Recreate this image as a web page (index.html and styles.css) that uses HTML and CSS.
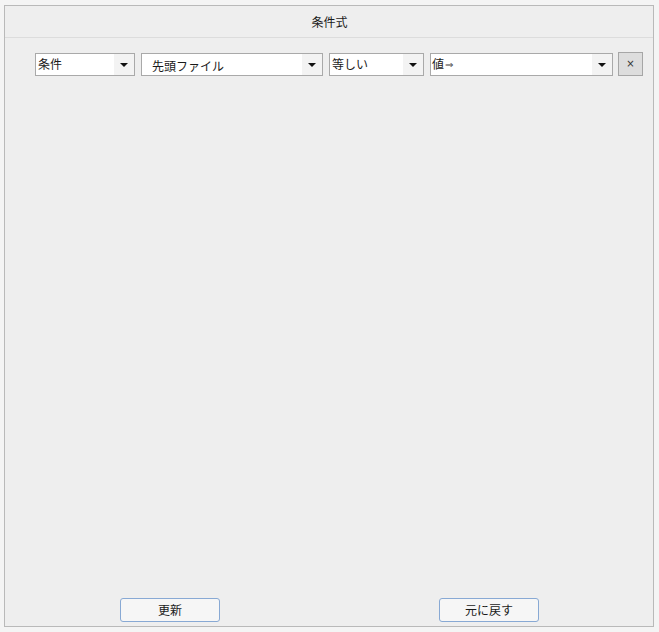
FILE: index.html
```html
<!DOCTYPE html>
<html lang="ja">
<head>
<meta charset="utf-8">
<link rel="stylesheet" href="styles.css">
</head>
<body>
<div class="frame">
  <div class="header">条件式</div>
  <div class="row">
    <div class="select w1"><span class="val">条件</span><span class="arrow"><i></i></span></div>
    <div class="select w2"><span class="val pad low">先頭ファイル</span><span class="arrow"><i></i></span></div>
    <div class="select w3"><span class="val">等しい</span><span class="arrow"><i></i></span></div>
    <div class="select w4"><span class="val tight">値<span class="sym">⇒</span></span><span class="arrow"><i></i></span></div>
    <div class="xbtn">×</div>
  </div>
  <div class="spacer"></div>
  <div class="footer">
    <div class="btn">更新</div>
    <div class="btn">元に戻す</div>
  </div>
</div>
</body>
</html>
```
FILE: styles.css
```css
html, body {
  margin: 0;
  padding: 0;
  background: #f4f4f4;
  font-family: "Noto Sans CJK JP", "Noto Sans", sans-serif;
  font-size: 12px;
  color: #1a1a1a;
}
.frame {
  box-sizing: border-box;
  margin: 5px 0 0 4px;
  width: 650px;
  height: 622px;
  border: 1px solid #b9b9b9;
  background: #eeeeee;
  display: flex;
  flex-direction: column;
}
.header {
  height: 31px;
  border-bottom: 1px solid #dcdcdc;
  display: flex;
  align-items: center;
  justify-content: center;
  line-height: 14px;
  font-size: 12px;
  padding-left: 1px;
}
.row {
  display: flex;
  margin-top: 15px;
  padding-left: 30px;
  gap: 6px;
  align-items: flex-start;
}
.select {
  box-sizing: border-box;
  height: 23px;
  border: 1px solid #a9a9a9;
  background: #ffffff;
  display: flex;
}
.w1 { width: 100px; }
.w2 { width: 182px; }
.w3 { width: 95px; }
.w4 { width: 183px; }
.val {
  flex: 1;
  line-height: 20px;
  padding-left: 2px;
  white-space: nowrap;
}
.val.tight { padding-left: 1px; }
.val.pad { padding-left: 10px; }
.val.low { line-height: 23px; }
.sym {
  font-family: "DejaVu Sans", sans-serif;
  font-size: 10px;
  color: #444444;
  margin-left: 1px;
  vertical-align: 1px;
}
.arrow {
  width: 20px;
  background: #f3f3f3;
  display: flex;
  align-items: center;
  justify-content: center;
}
.arrow i {
  width: 0;
  height: 0;
  border-left: 4px solid transparent;
  border-right: 4px solid transparent;
  border-top: 4px solid #111111;
  margin-top: 1px;
}
.xbtn {
  box-sizing: border-box;
  width: 25px;
  height: 24px;
  margin-left: -1px;
  margin-top: -1px;
  border: 1px solid #a6a6a6;
  background: #dddddd;
  display: flex;
  align-items: center;
  justify-content: center;
  font-family: "DejaVu Sans", sans-serif;
  font-size: 10px;
  line-height: 10px;
  color: #333333;
}
.spacer { flex: 1; }
.footer {
  display: flex;
  padding-left: 115px;
  gap: 219px;
  margin-bottom: 4px;
}
.btn {
  box-sizing: border-box;
  width: 100px;
  height: 24px;
  border: 1px solid #88a9d4;
  border-radius: 3px;
  background: #f6f6f6;
  display: flex;
  align-items: center;
  justify-content: center;
  line-height: 14px;
  font-size: 12px;
}
```
